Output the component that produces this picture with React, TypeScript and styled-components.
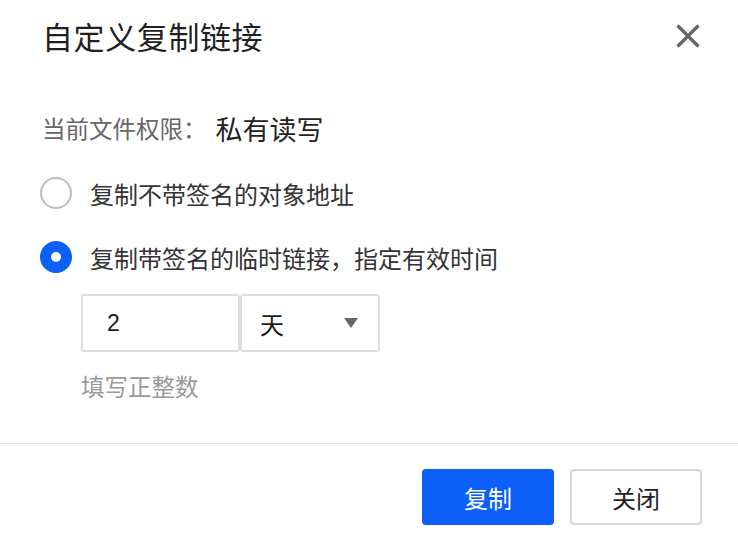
import React, { useState } from "react";
import styled, { createGlobalStyle } from "styled-components";

const Global = createGlobalStyle`
  html, body { margin: 0; padding: 0; background: #fff; }
  body { font-family: "PingFang SC", "Noto Sans CJK SC", "Noto Sans", sans-serif; }
  * { box-sizing: border-box; }
`;

const Dialog = styled.div`
  width: 738px;
  height: 541px;
  background: #fff;
  display: flex;
  flex-direction: column;
`;

const Header = styled.div`
  height: 72px;
  padding: 0 38px 0 42px;
  display: flex;
  align-items: center;
  justify-content: space-between;
`;

const Title = styled.h1`
  margin: 0;
  font-size: 31px;
  letter-spacing: 0.6px;
  font-weight: 400;
  color: #1f1f1f;
  line-height: 40px;
`;

const CloseButton = styled.button`
  width: 24px;
  height: 24px;
  padding: 0;
  border: none;
  background: none;
  display: flex;
  cursor: pointer;
`;

const Body = styled.div`
  flex: 1;
  padding: 0 40px;
  display: flex;
  flex-direction: column;
`;

const PermissionRow = styled.div`
  margin-top: 38px;
  height: 36px;
  display: flex;
  align-items: center;
  padding-left: 2px;
`;

const PermLabel = styled.span`
  font-size: 23.5px;
  color: #666;
`;

const PermValue = styled.span`
  font-size: 27px;
  color: #222;
  margin-left: 9px;
`;

const RadioRow = styled.label<{ $gap: number }>`
  margin-top: ${(p) => p.$gap}px;
  height: 40px;
  display: flex;
  align-items: center;
  cursor: pointer;
`;

const RadioCircle = styled.span<{ $checked: boolean }>`
  width: 32px;
  height: 32px;
  border-radius: 50%;
  flex: none;
  border: ${(p) => (p.$checked ? "11px solid #0c5ff7" : "2px solid #bdbdbd")};
  background: #fff;
`;

const RadioText = styled.span`
  margin-left: 18px;
  font-size: 24px;
  color: #333;
`;

const FieldGroup = styled.div`
  margin-top: 17px;
  margin-left: 41px;
  display: flex;
  height: 58px;
`;

const NumberInput = styled.input`
  width: 159px;
  height: 58px;
  border: 2px solid #dedede;
  border-radius: 3px;
  padding: 0 0 0 24px;
  font-size: 23px;
  font-family: "Liberation Sans", Arial, sans-serif;
  color: #1a1a1a;
  outline: none;
`;

const Select = styled.div`
  width: 140px;
  height: 58px;
  border: 2px solid #dedede;
  border-radius: 3px;
  display: flex;
  align-items: center;
  justify-content: space-between;
  padding: 0 20px 0 18px;
  font-size: 24px;
  color: #1a1a1a;
`;

const Caret = styled.span`
  width: 0;
  height: 0;
  border-left: 7px solid transparent;
  border-right: 7px solid transparent;
  border-top: 10px solid #666;
`;

const Hint = styled.div`
  margin-top: 19px;
  margin-left: 41px;
  line-height: 30px;
  font-size: 23.5px;
  color: #999;
`;

const Footer = styled.div`
  border-top: 1.5px solid #e6e6e6;
  height: 98px;
  padding: 25px 36px 0 0;
  display: flex;
  justify-content: flex-end;
  gap: 16px;
`;

const Button = styled.button<{ $primary?: boolean }>`
  width: 132px;
  height: 56px;
  border-radius: 4px;
  font-family: inherit;
  font-size: 24px;
  cursor: pointer;
  background: ${(p) => (p.$primary ? "#0c5ff7" : "#fff")};
  color: ${(p) => (p.$primary ? "#fff" : "#222")};
  border: ${(p) => (p.$primary ? "none" : "2px solid #d6d6d6")};
`;

export default function App() {
  const [mode, setMode] = useState<"plain" | "signed">("signed");
  return (
    <>
      <Global />
      <Dialog>
        <Header>
          <Title>自定义复制链接</Title>
          <CloseButton aria-label="关闭">
            <svg width="24" height="24" viewBox="0 0 24 24">
              <path d="M1.5 1.5 L22.5 22.5 M22.5 1.5 L1.5 22.5" stroke="#666" strokeWidth="3.2" strokeLinecap="butt" />
            </svg>
          </CloseButton>
        </Header>
        <Body>
          <PermissionRow>
            <PermLabel>当前文件权限：</PermLabel>
            <PermValue>私有读写</PermValue>
          </PermissionRow>
          <RadioRow $gap={27} onClick={() => setMode("plain")}>
            <RadioCircle $checked={mode === "plain"} />
            <RadioText>复制不带签名的对象地址</RadioText>
          </RadioRow>
          <RadioRow $gap={24} onClick={() => setMode("signed")}>
            <RadioCircle $checked={mode === "signed"} />
            <RadioText>复制带签名的临时链接，指定有效时间</RadioText>
          </RadioRow>
          <FieldGroup>
            <NumberInput defaultValue="2" />
            <Select>
              <span>天</span>
              <Caret />
            </Select>
          </FieldGroup>
          <Hint>填写正整数</Hint>
        </Body>
        <Footer>
          <Button $primary>复制</Button>
          <Button>关闭</Button>
        </Footer>
      </Dialog>
    </>
  );
}
